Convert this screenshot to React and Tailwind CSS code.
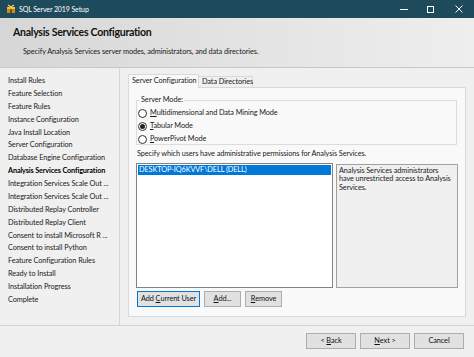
import React from "react";

const F = { fontFamily: 'Lato, "Liberation Sans", sans-serif' };

const navItems = [
  "Install Rules",
  "Feature Selection",
  "Feature Rules",
  "Instance Configuration",
  "Java Install Location",
  "Server Configuration",
  "Database Engine Configuration",
  "Analysis Services Configuration",
  "Integration Services Scale Out ...",
  "Integration Services Scale Out ...",
  "Distributed Replay Controller",
  "Distributed Replay Client",
  "Consent to install Microsoft R ...",
  "Consent to install Python",
  "Feature Configuration Rules",
  "Ready to Install",
  "Installation Progress",
  "Complete",
];

const U = ({ children }) => (
  <span className="underline decoration-[0.5px] underline-offset-1">{children}</span>
);

function Radio({ checked, children }) {
  return (
    <div className="flex items-center h-[13px] whitespace-nowrap">
      <div className="w-[9px] h-[9px] rounded-full border border-[#333] bg-white flex items-center justify-center shrink-0">
        {checked && <div className="w-[5px] h-[5px] rounded-full bg-[#222]" />}
      </div>
      <span className="ml-[3px]">{children}</span>
    </div>
  );
}

function Btn({ children, className = "" }) {
  return (
    <div className={`flex items-center justify-center border border-[#adadad] bg-[#e1e1e1] text-[#111] whitespace-nowrap ${className}`}>
      {children}
    </div>
  );
}

export default function App() {
  return (
    <div className="w-[474px] h-[357px] overflow-hidden flex flex-col bg-[#f0f0f0] text-[7.3px] tracking-[-0.08px] text-[#1a1a1a]" style={F}>
      {/* title bar */}
      <div className="h-[18px] bg-[#1d4b5b] flex items-center text-white shrink-0">
        <svg width="10" height="10" viewBox="0 0 10 10" className="ml-[6px]">
          <rect x="1" y="3" width="8" height="6" fill="#c98a1c" />
          <rect x="1" y="3" width="8" height="2" fill="#f1c232" />
          <path d="M2 1 L5 3 L8 1" stroke="#f6d35a" strokeWidth="1.2" fill="none" />
          <rect x="4" y="5" width="2" height="4" fill="#7a4a0c" />
        </svg>
        <span className="ml-[3px] text-[7px] tracking-[-0.1px]">SQL Server 2019 Setup</span>
        <div className="ml-auto flex items-center h-full">
          <div className="w-[27px] flex justify-center">
            <div className="w-[8px] h-px bg-white" />
          </div>
          <div className="w-[27px] flex justify-center">
            <div className="w-[7px] h-[7px] border border-white" />
          </div>
          <div className="w-[30px] flex justify-center">
            <svg width="8" height="8" viewBox="0 0 8 8">
              <path d="M0.5 0.5 L7.5 7.5 M7.5 0.5 L0.5 7.5" stroke="white" strokeWidth="1" />
            </svg>
          </div>
        </div>
      </div>

      {/* header */}
      <div className="h-[50px] shrink-0 bg-gradient-to-r from-[#d6d6d6] via-[#e3e3e3] to-[#eeeeee] border-b border-[#c8c8c8] flex flex-col">
        <div className="ml-[13px] mt-[6px] text-[10.6px] tracking-[-0.3px] font-bold text-[#111] leading-[16px] whitespace-nowrap">Analysis Services Configuration</div>
        <div className="ml-[23px] mt-[7px] leading-[10px] whitespace-nowrap">Specify Analysis Services server modes, administrators, and data directories.</div>
      </div>

      {/* middle */}
      <div className="flex h-[257px] shrink-0">
        <div className="w-[120px] border-r border-[#d6d6d6] pt-[7px] pl-[8px] shrink-0">
          {navItems.map((t, i) => (
            <div key={i} className={`h-[12.88px] leading-[12.88px] whitespace-nowrap ${i === 7 ? "font-bold text-[#000] tracking-[-0.15px]" : ""}`}>
              {t}
            </div>
          ))}
        </div>

        <div className="flex-1 pl-[8px] pr-[8px] pt-[6px] flex flex-col">
          {/* tabs */}
          <div className="flex items-end h-[14px]">
            <div className="h-[14px] px-[3px] w-[71px] border border-b-0 border-[#d9d9d9] bg-[#f9f9f9] flex items-center relative z-10 whitespace-nowrap">
              Server Configuration
            </div>
            <div className="h-[12px] w-[54px] border border-l-0 border-b-0 border-[#d9d9d9] bg-[#f0f0f0] flex items-center pl-[3px] whitespace-nowrap">
              Data Directories
            </div>
          </div>
          <div className="h-[230px] border border-[#d9d9d9] bg-[#f9f9f9] -mt-px pl-[7px] pr-[7px] flex flex-col">
            {/* group box */}
            <div className="relative mt-[12px] h-[45px] border border-[#dcdcdc] mr-px">
              <div className="absolute left-[3px] -top-[6px] bg-[#f9f9f9] px-px leading-[10px]">Server Mode:</div>
              <div className="pl-[1px] pt-[6px] flex flex-col">
                <Radio><U>M</U>ultidimensional and Data Mining Mode</Radio>
                <Radio checked><U>T</U>abular Mode</Radio>
                <Radio><U>P</U>owerPivot Mode</Radio>
              </div>
            </div>
            <div className="mt-[4px] leading-[10px] pl-[1px] whitespace-nowrap">Specify which users have administrative permissions for Analysis Services.</div>
            <div className="flex mt-[4px] h-[125px]">
              <div className="w-[197px] border border-[#828282] bg-white p-px">
                <div className="h-[10px] leading-[10px] bg-[#0078d7] text-white pl-[1px] whitespace-nowrap">DESKTOP-IQ6KVVF\DELL (DELL)</div>
              </div>
              <div className="ml-[3px] mt-px w-[122px] border border-[#a0a0a0] bg-[#f0f0f0] px-[2px] pt-[2px] leading-[8.4px]">
                Analysis Services administrators have unrestricted access to Analysis Services.
              </div>
            </div>
            <div className="flex mt-[3px] gap-[4px] pl-[1px]">
              <Btn className="w-[63px] h-[16px] !border-[#0078d7]">
                Add&nbsp;<U>C</U>urrent User
              </Btn>
              <Btn className="w-[37px] h-[16px]">
                <U>A</U>dd...
              </Btn>
              <Btn className="w-[37px] h-[16px]">
                <U>R</U>emove
              </Btn>
            </div>
          </div>
        </div>
      </div>

      {/* bottom */}
      <div className="flex-1 border-t border-[#d4d4d4] flex items-start justify-end pr-[10px] pt-[7px] gap-[4px]">
        <Btn className="w-[50px] h-[16px]">&lt;&nbsp;<U>B</U>ack</Btn>
        <Btn className="w-[50px] h-[16px]"><U>N</U>ext &gt;</Btn>
        <Btn className="w-[50px] h-[16px]">Cancel</Btn>
      </div>
    </div>
  );
}
